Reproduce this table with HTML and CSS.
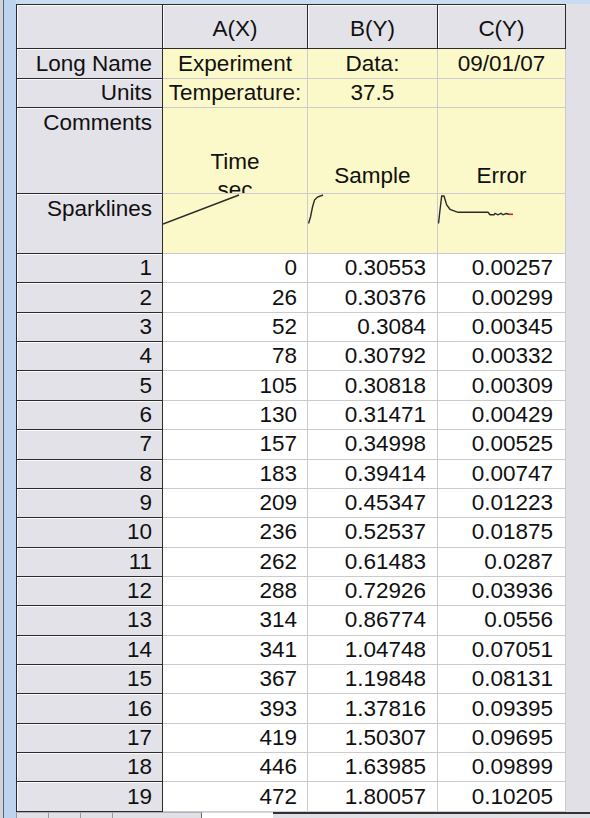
FILE: index.html
```html
<!DOCTYPE html>
<html>
<head>
<meta charset="utf-8">
<link rel="stylesheet" href="styles.css">
</head>
<body>
<div class="app">
  <div class="frame-left"></div>
  <div class="main">
    <div class="frame-top"></div>
    <div class="sheet">
      <div class="c corner"></div>
      <div class="c ch">A(X)</div>
      <div class="c ch">B(Y)</div>
      <div class="c ch">C(Y)</div>

      <div class="c rh">Long Name</div>
      <div class="c lab">Experiment</div>
      <div class="c lab">Data:</div>
      <div class="c lab">09/01/07</div>

      <div class="c rh">Units</div>
      <div class="c lab">Temperature:</div>
      <div class="c lab">37.5</div>
      <div class="c lab"></div>

      <div class="c rh top">Comments</div>
      <div class="c lab com"><div class="two"><div>Time</div><div>sec</div></div></div>
      <div class="c lab com"><div>Sample</div></div>
      <div class="c lab com"><div>Error</div></div>

      <div class="c rh top">Sparklines</div>
      <div class="c lab spark"><svg width="144" height="59" viewBox="0 0 144 59"><polyline points="0,30 76,1" fill="none" stroke="#2a2a2a" stroke-width="1.4"/></svg></div>
      <div class="c lab spark"><svg width="129" height="59" viewBox="0 0 129 59"><polyline points="0.5,29.5 2.5,23 4.5,13 6.5,6 9.5,3 15,1" fill="none" stroke="#2a2a2a" stroke-width="1.4"/></svg></div>
      <div class="c lab spark"><svg width="127" height="59" viewBox="0 0 127 59"><polyline points="0.5,29.5 2,16 3.7,2 6,2 8.7,11 12,15.3 20,18.3 50,18.3 52,20.8 56,20.8 57,19.3 60,20.8 63,19.3 65,20.8 68,19.6 71,20.3" fill="none" stroke="#2a2a2a" stroke-width="1.4"/><polyline points="71,20.3 75,20.3" fill="none" stroke="#e02020" stroke-width="1.6"/></svg></div>

      <div class="c rh">1</div><div class="c num a">0</div><div class="c num b">0.30553</div><div class="c num d">0.00257</div>
      <div class="c rh">2</div><div class="c num a">26</div><div class="c num b">0.30376</div><div class="c num d">0.00299</div>
      <div class="c rh">3</div><div class="c num a">52</div><div class="c num b">0.3084</div><div class="c num d">0.00345</div>
      <div class="c rh">4</div><div class="c num a">78</div><div class="c num b">0.30792</div><div class="c num d">0.00332</div>
      <div class="c rh">5</div><div class="c num a">105</div><div class="c num b">0.30818</div><div class="c num d">0.00309</div>
      <div class="c rh">6</div><div class="c num a">130</div><div class="c num b">0.31471</div><div class="c num d">0.00429</div>
      <div class="c rh">7</div><div class="c num a">157</div><div class="c num b">0.34998</div><div class="c num d">0.00525</div>
      <div class="c rh">8</div><div class="c num a">183</div><div class="c num b">0.39414</div><div class="c num d">0.00747</div>
      <div class="c rh">9</div><div class="c num a">209</div><div class="c num b">0.45347</div><div class="c num d">0.01223</div>
      <div class="c rh">10</div><div class="c num a">236</div><div class="c num b">0.52537</div><div class="c num d">0.01875</div>
      <div class="c rh">11</div><div class="c num a">262</div><div class="c num b">0.61483</div><div class="c num d">0.0287</div>
      <div class="c rh">12</div><div class="c num a">288</div><div class="c num b">0.72926</div><div class="c num d">0.03936</div>
      <div class="c rh">13</div><div class="c num a">314</div><div class="c num b">0.86774</div><div class="c num d">0.0556</div>
      <div class="c rh">14</div><div class="c num a">341</div><div class="c num b">1.04748</div><div class="c num d">0.07051</div>
      <div class="c rh">15</div><div class="c num a">367</div><div class="c num b">1.19848</div><div class="c num d">0.08131</div>
      <div class="c rh">16</div><div class="c num a">393</div><div class="c num b">1.37816</div><div class="c num d">0.09395</div>
      <div class="c rh">17</div><div class="c num a">419</div><div class="c num b">1.50307</div><div class="c num d">0.09695</div>
      <div class="c rh">18</div><div class="c num a">446</div><div class="c num b">1.63985</div><div class="c num d">0.09899</div>
      <div class="c rh">19</div><div class="c num a">472</div><div class="c num b">1.80057</div><div class="c num d">0.10205</div>
    </div>
    <div class="tabs">
      <div class="tb"></div>
      <div class="tb"></div>
      <div class="tb"></div>
      <div class="tb wide"></div>
      <div class="tab-active"></div>
      <div class="tab-rest"></div>
    </div>
  </div>
</div>
</body>
</html>
```
FILE: styles.css
```css
* { box-sizing: border-box; }
html, body { margin: 0; padding: 0; }
body {
  width: 590px;
  height: 818px;
  overflow: hidden;
  background: #e1e0e6;
  font-family: "Liberation Sans", Arial, sans-serif;
  font-size: 22.5px;
  color: #101010;
}
.app { display: flex; height: 818px; }
.frame-left {
  width: 16px;
  flex: none;
  background: linear-gradient(to right, #d0d3d8 0 3px, #5a6068 3px 4px, #bcd4ee 4px 16px);
}
.main { flex: 1; display: flex; flex-direction: column; min-width: 0; }
.frame-top { height: 4px; flex: none; background: #c9dcf1; }
.sheet {
  display: grid;
  width: 550px;
  grid-template-columns: 146px 145px 130px 128px;
  grid-template-rows: 44px 30px 29px 86px 60px repeat(19, 29.37px);
  border-left: 1px solid #2b2b2b;
  border-top: 1px solid #2b2b2b;
  flex: none;
}
.c {
  display: flex;
  align-items: center;
  overflow: hidden;
  white-space: nowrap;
  line-height: 26px;
  border-right: 1px solid #cbcbcb;
  border-bottom: 1px solid #cbcbcb;
}
.corner, .ch, .rh {
  background: #e3e2e8;
  border-right-color: #2b2b2b;
  border-bottom-color: #2b2b2b;
  box-shadow: inset 1px 1px 0 #fbfbfd;
}
.ch { justify-content: center; padding-top: 4px; }
.rh { justify-content: flex-end; padding-right: 10px; }
.rh.top { align-items: flex-start; padding-top: 2px; }
.lab { background: #fbf9c9; justify-content: center; }
.lab.com {
  flex-direction: column;
  justify-content: flex-end;
  align-items: center;
  padding-bottom: 4px;
}
.two { margin-bottom: -15px; line-height: 28px; text-align: center; }
.lab.spark { padding: 0; align-items: flex-start; justify-content: flex-start; }
.lab.spark svg { display: block; }
.num { background: #fff; justify-content: flex-end; }
.num.a { padding-right: 10px; }
.num.b { padding-right: 11px; }
.num.d { padding-right: 12px; }
.tabs {
  display: flex;
  height: 6px;
  flex: none;
  background: #e1e0e6;
}
.tb {
  width: 32px;
  border-left: 1px solid #9a9aa0;
  border-top: 1px solid #b0b0b6;
}
.tb.wide { width: 90px; border-right: 1px solid #6a6a70; }
.tab-active { width: 71px; background: #ffffff; border-top: 1px solid #d8d8d8; }
.tab-rest { flex: 1; border-top: 2px solid #333333; }
```
